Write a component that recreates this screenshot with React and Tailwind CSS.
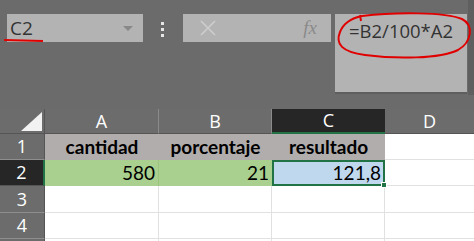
import React from "react";

const cellFont = { fontFamily: "Lato, 'Open Sans', sans-serif" };
const uiFont = { fontFamily: "'Open Sans', 'Noto Sans', sans-serif" };

function RowHead({ n, active }) {
  return (
    <div
      className={
        "flex items-center justify-center text-[18px] text-white border-b border-r " +
        (active ? "bg-[#262626] border-b-[#555] border-r-[#217346] border-r-2" : "bg-[#6c6c6c] border-b-[#8e8e8e] border-r-[#555]")
      }
      style={uiFont}
    >
      {n}
    </div>
  );
}

export default function App() {
  return (
    <div className="relative w-[474px] h-[241px] overflow-hidden bg-[#6b6b6b]">
      {/* formula bar */}
      <div className="flex h-[109px] items-start pt-[14px]">
        <div className="ml-[7px] flex h-[28px] w-[136px] items-center justify-between bg-[#b3b3b3] pl-[3px] pr-[10px]">
          <span className="text-[19px] leading-none text-[#333]" style={uiFont}>C2</span>
          <span className="h-0 w-0 border-l-[5px] border-r-[5px] border-t-[5px] border-l-transparent border-r-transparent border-t-[#888]" />
        </div>
        <div className="ml-[18px] mt-[8px] flex flex-col gap-[3px]">
          <span className="h-[3px] w-[3px] bg-[#e6e6e6]" />
          <span className="h-[3px] w-[3px] bg-[#e6e6e6]" />
          <span className="h-[3px] w-[3px] bg-[#e6e6e6]" />
        </div>
        <div className="ml-[19px] flex h-[28px] w-[148px] items-center justify-between bg-[#b3b3b3] pl-[16px] pr-[14px]">
          <svg width="18" height="16" viewBox="0 0 18 16">
            <path d="M2 1 L16 15 M16 1 L2 15" stroke="#cdcdcd" strokeWidth="1.6" fill="none" />
          </svg>
          <span className="text-[19px] italic text-[#8a8a8a]" style={{ fontFamily: "'Liberation Serif', serif" }}>fx</span>
        </div>
        <div className="ml-[4px] h-[80px] w-[132px] border-b-2 border-[#5e5e5e] bg-[#b3b3b3] pl-[14px] pt-[3px]">
          <span className="text-[18.5px] text-[#333]" style={uiFont}>=B2/100*A2</span>
        </div>
        <div className="h-[95px] flex-1 bg-[#5f5f5f] -mt-[14px] ml-[1px]" />
      </div>

      {/* grid */}
      <div className="grid grid-cols-[45px_114px_113px_113px_1fr] grid-rows-[25px_26px_26px_27px_26px_10px]">
        {/* header row */}
        <div className="relative border-b border-r border-[#555] bg-[#6c6c6c]">
          <span className="absolute bottom-[2px] right-[2px] h-0 w-0 border-b-[19px] border-l-[21px] border-b-[#f2f2f2] border-l-transparent" />
        </div>
        <div className="flex items-center justify-center border-b border-r border-b-[#555] border-r-[#8a8a8a] bg-[#6c6c6c] text-[18px] text-white" style={uiFont}>A</div>
        <div className="flex items-center justify-center border-b border-r border-b-[#555] border-r-[#8a8a8a] bg-[#6c6c6c] text-[18px] text-white" style={uiFont}>B</div>
        <div className="flex items-center justify-center border-b-2 border-b-[#217346] bg-[#262626] text-[18px] text-white" style={uiFont}>C</div>
        <div className="flex items-center justify-center border-b border-b-[#555] bg-[#6c6c6c] text-[18px] text-white" style={uiFont}>D</div>

        {/* row 1 */}
        <RowHead n="1" />
        <div className="flex items-center justify-center bg-[#b1adad] text-[19px] font-bold text-black" style={cellFont}>cantidad</div>
        <div className="flex items-center justify-center bg-[#b1adad] text-[19px] font-bold text-black" style={cellFont}>porcentaje</div>
        <div className="flex items-center justify-center bg-[#b1adad] text-[19px] font-bold text-black" style={cellFont}>resultado</div>
        <div className="border-b border-[#e1e1e1] bg-white" />

        {/* row 2 */}
        <RowHead n="2" active />
        <div className="flex items-center justify-end border-r border-[#9cc47f] bg-[#a9d08e] pr-[3px] text-[19px] text-black" style={cellFont}>580</div>
        <div className="flex items-center justify-end bg-[#a9d08e] pr-[3px] text-[19px] text-black" style={cellFont}>21</div>
        <div className="relative flex items-center justify-end border-2 border-[#217346] bg-[#bfd8ee] pr-[2px] text-[19px] text-black" style={cellFont}>
          121,8
          <span className="absolute -bottom-[4px] -right-[4px] h-[6px] w-[6px] border border-white bg-[#217346]" />
        </div>
        <div className="border-b border-[#e1e1e1] bg-white" />

        {/* row 3 */}
        <RowHead n="3" />
        <div className="border-b border-r border-[#e1e1e1] bg-white" />
        <div className="border-b border-r border-[#e1e1e1] bg-white" />
        <div className="border-b border-r border-[#e1e1e1] bg-white" />
        <div className="border-b border-[#e1e1e1] bg-white" />

        {/* row 4 */}
        <RowHead n="4" />
        <div className="border-b border-r border-[#e1e1e1] bg-white" />
        <div className="border-b border-r border-[#e1e1e1] bg-white" />
        <div className="border-b border-r border-[#e1e1e1] bg-white" />
        <div className="border-b border-[#e1e1e1] bg-white" />

        {/* row 5 (cut) */}
        <div className="border-r border-[#555] bg-[#6c6c6c]" />
        <div className="border-r border-[#e1e1e1] bg-white" />
        <div className="border-r border-[#e1e1e1] bg-white" />
        <div className="border-r border-[#e1e1e1] bg-white" />
        <div className="bg-white" />
      </div>

      {/* red annotations */}
      <svg className="pointer-events-none absolute left-0 top-0" width="474" height="241">
        <path d="M4 40 L43 41" stroke="#e00000" strokeWidth="2" fill="none" />
        <path
          d="M360 15 L361 21 M362 16 C395 12 445 12 462 19 C474 25 472 42 458 50 C440 59 395 59 365 55 C342 52 335 44 340 32 C344 22 352 18 362 16"
          stroke="#e00000"
          strokeWidth="2"
          fill="none"
        />
      </svg>
    </div>
  );
}
